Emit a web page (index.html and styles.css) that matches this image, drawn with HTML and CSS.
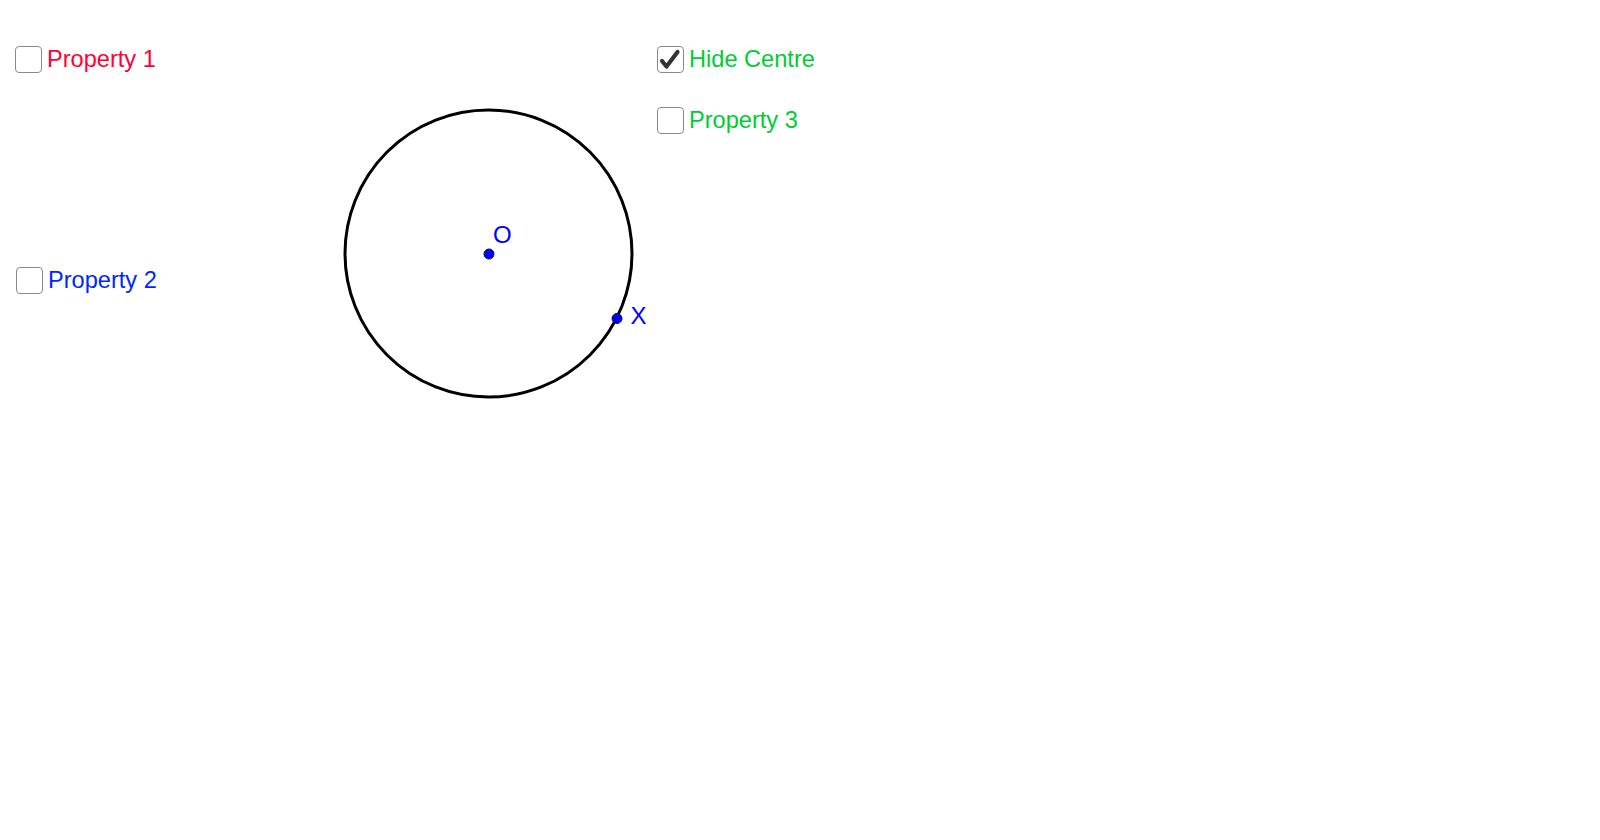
FILE: index.html
```html
<!DOCTYPE html>
<html>
<head>
<meta charset="utf-8">
<link rel="stylesheet" href="styles.css">
</head>
<body>
<div class="applet">
  <svg class="canvas" width="1600" height="840" viewBox="0 0 1600 840">
    <circle cx="488.5" cy="253.5" r="143.5" fill="none" stroke="#000" stroke-width="3"/>
    <circle cx="489" cy="254" r="5" fill="#0000ff" stroke="#101040" stroke-width="1"/>
    <circle cx="617" cy="318.5" r="5" fill="#0000ff" stroke="#101040" stroke-width="1"/>
    <text x="493" y="242.5" class="lbl">O</text>
    <text x="630.5" y="324" class="lbl">X</text>
  </svg>

  <label class="cb red p1"><span class="box"></span><span class="txt">Property 1</span></label>
  <label class="cb green hide"><span class="box"><svg width="27" height="27" viewBox="0 0 27 27"><path d="M5 15 L9.5 20.5 L20.5 6" fill="none" stroke="#333" stroke-width="4.2" stroke-linecap="round" stroke-linejoin="round"/></svg></span><span class="txt">Hide Centre</span></label>
  <label class="cb green p3"><span class="box"></span><span class="txt">Property 3</span></label>
  <label class="cb blue p2"><span class="box"></span><span class="txt">Property 2</span></label>
</div>
</body>
</html>
```
FILE: styles.css
```css
html, body {
  margin: 0;
  padding: 0;
  background: #fff;
  overflow: hidden;
}
.applet {
  position: relative;
  width: 1600px;
  height: 840px;
  font-family: "Liberation Sans", Arial, sans-serif;
}
.canvas {
  position: absolute;
  left: 0;
  top: 0;
}
.lbl {
  font-family: "Liberation Sans", Arial, sans-serif;
  font-size: 24px;
  fill: #0000ff;
}
.cb {
  position: absolute;
  display: flex;
  align-items: center;
  gap: 5px;
  height: 27px;
}
.box {
  box-sizing: border-box;
  width: 27px;
  height: 27px;
  border: 1.5px solid #8a8a8a;
  border-radius: 4px;
  background: #fff;
  position: relative;
}
.box svg {
  position: absolute;
  left: -1.5px;
  top: -1.5px;
}
.txt {
  font-size: 23.6px;
  line-height: 27px;
  position: relative;
  top: 0;
}
.red { color: #ff0033; }
.green { color: #00cc33; }
.blue { color: #0026ff; }
.p1 { left: 15px; top: 46px; }
.hide { left: 657px; top: 46px; }
.p3 { left: 657px; top: 107px; }
.p2 { left: 16px; top: 267px; }
```
